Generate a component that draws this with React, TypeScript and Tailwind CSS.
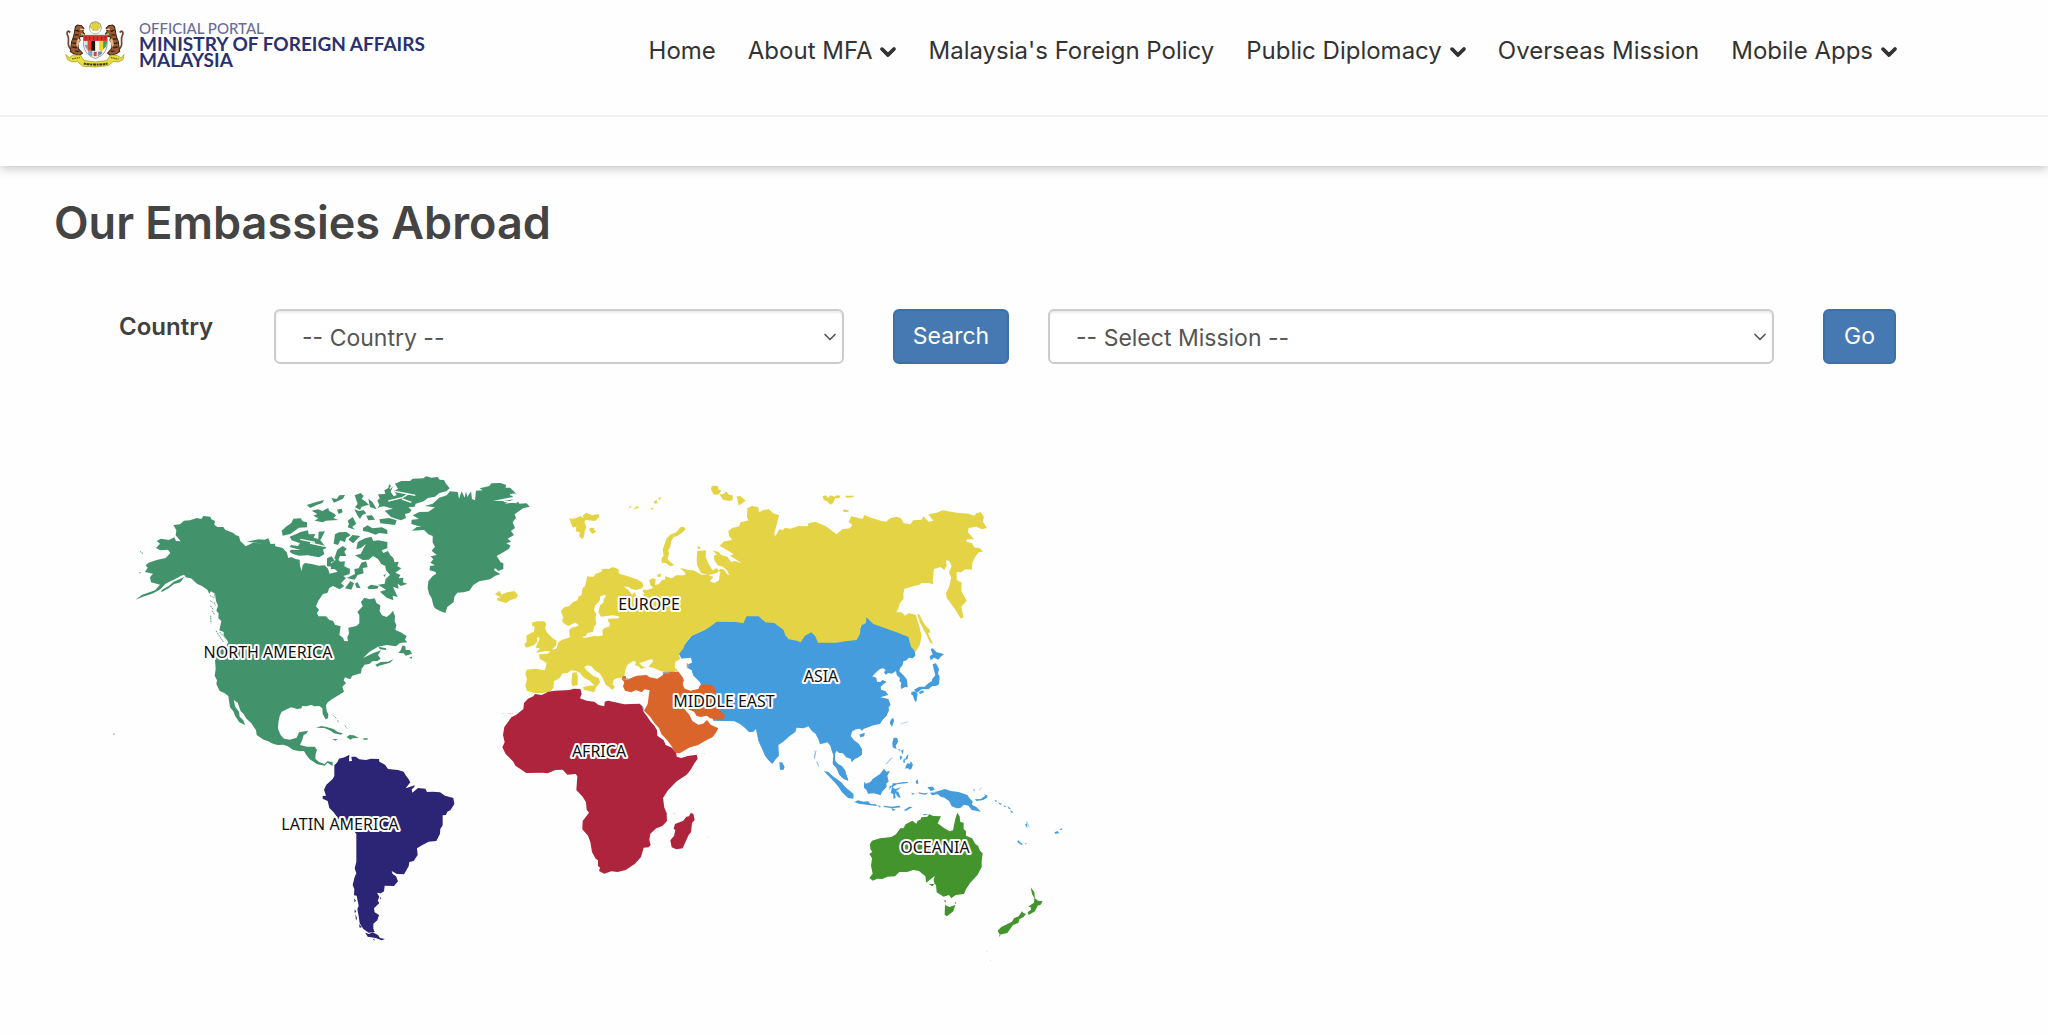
import { ChevronDown } from 'lucide-react'
import { FaChevronDown } from 'react-icons/fa6'

type NavItem = { label: string; hasMenu?: boolean }

const navItems: NavItem[] = [
  { label: 'Home' },
  { label: 'About MFA', hasMenu: true },
  { label: "Malaysia's Foreign Policy" },
  { label: 'Public Diplomacy', hasMenu: true },
  { label: 'Overseas Mission' },
  { label: 'Mobile Apps', hasMenu: true },
]

const regionLabels = [
  { name: 'NORTH AMERICA', x: 268, y: 659 },
  { name: 'LATIN AMERICA', x: 340, y: 831 },
  { name: 'EUROPE', x: 649, y: 611 },
  { name: 'AFRICA', x: 599, y: 758 },
  { name: 'MIDDLE EAST', x: 724, y: 708 },
  { name: 'ASIA', x: 821, y: 683 },
  { name: 'OCEANIA', x: 935, y: 854 },
]

function Crest() {
  return (
    <svg viewBox="76 64 176 142" className="h-12 w-[60px]" aria-hidden="true">
      {/* tigers */}
      {[false, true].map((flip) => (
        <g key={String(flip)} transform={flip ? 'translate(328 0) scale(-1 1)' : undefined}>
          <path d="M92 150C78 138 90 124 84 112C80 104 80 98 86 97L91 101" fill="none" stroke="#6d4530" strokeWidth="5" />
          <path d="M106 84L112 79L124 81L131 88L128 98L133 105L131 112L117 114L120 124L113 134L116 150L127 162L119 168L101 164L91 157L95 128L101 112Z" fill="#9a5b32" stroke="#3c2417" strokeWidth="3" />
          <path d="M106 94L118 98M103 108L116 108M99 120L114 121M97 132L111 134M97 144L110 146M106 156L117 157" stroke="#2d211b" strokeWidth="4" />
          <path d="M113 117L120 123L114 137L116 147L108 137Z" fill="#e5b989" />
          <path d="M120 91L131 92M123 105L133 108" stroke="#f1d5aa" strokeWidth="3" />
        </g>
      ))}
      {/* crescent and star */}
      <circle cx="165" cy="86" r="17" fill="#f8f5d6" stroke="#9a9b77" strokeWidth="3" />
      <path d="M150 80A17 17 0 1 0 180 80A15 15 0 0 1 150 80Z" fill="#fffef0" stroke="#aaa889" strokeWidth="2" />
      <path d="M165 69L168 75L175 73L174 80L179 84L173 88L172 95L165 92L158 95L157 88L151 84L156 80L155 73L162 75Z" fill="#e7d42b" stroke="#a69920" />
      {/* shield */}
      <path d="M130 109H200V132C200 157 186 171 165 178C144 171 130 157 130 132Z" fill="#f9f4ef" stroke="#777" strokeWidth="2" />
      <path d="M130 109H200V126H130Z" fill="#d5332d" />
      <path d="M137 112V123M148 112V123M160 112V123M171 112V123M183 112V123M194 112V123" stroke="#9d211d" strokeWidth="3" />
      <path d="M130 126H142V151C134 143 130 136 130 126Z" fill="#d8e4e7" />
      <path d="M142 126H154V155H142Z" fill="#e94032" />
      <path d="M153 126H165V155H153Z" fill="#141414" />
      <path d="M165 126H177V155H165Z" fill="#f8f4e5" />
      <path d="M176 126H188V155H176Z" fill="#f0d528" />
      <path d="M188 126H200C200 138 196 145 188 151Z" fill="#4c9d57" />
      <path d="M133 139H142V153Z" fill="#46a5bf" />
      <path d="M144 156H156V173L144 165Z" fill="#6daac8" />
      <path d="M160 158H169V171H160Z" fill="#cb4746" />
      <path d="M173 157H185V163L173 172Z" fill="#748db6" />
      {/* ribbon */}
      <path d="M78 166L88 176L98 168L121 168L132 184L165 188L199 184L210 168L231 169L241 177L250 166L247 181L234 188L218 187L203 199L165 203L128 201L112 187L95 188L82 181Z" fill="#e7dc42" stroke="#99962a" strokeWidth="2" />
      <path d="M96 179L119 175M211 175L234 180" stroke="#756f21" strokeWidth="4" strokeDasharray="5 2" />
      <path d="M131 193Q165 199 201 193" fill="none" stroke="#39380f" strokeWidth="6" strokeDasharray="6 2 9 2" />
    </svg>
  )
}

function WorldMap() {
  return (
    <svg viewBox="100 460 980 510" className="h-auto w-[980px] max-w-full" role="img" aria-label="World map of missions by region">
      <g transform="translate(740 470) scale(.33333)" fill="#459cdd">
        <path d="M-183 555L-182 540L-165 525L-145 500L-105 482L-70 455L10 455L20 436H60L100 456L130 475L190 490L215 484L240 510L350 500L378 440L440 465L505 492L520 530L525 550L526 560L518 568L506 566L500 574L490 577L488 588L480 598L478 607L492 620L501 632L503 655L495 654L484 660L482 650L484 642L478 635L480 628L470 618L468 606L455 614L445 612L437 617L432 610L437 603L430 598L420 600L410 608L397 622L409 626L411 638L421 639L427 633L440 638L430 646L422 653L423 662L436 666L445 678L421 685L445 690L452 708L446 714L447 724L440 740L428 752L420 765L400 769L385 775L372 779L365 785L360 779L348 781L337 787L332 800L342 814L355 823L366 840L366 857L352 867L345 869L335 880L332 869L318 865L309 853L297 852L290 845L285 854L285 873L292 884L305 890L315 903L320 920L325 935L311 930L299 918L291 899L278 882L280 858L275 845L271 830L262 820L252 823L240 826L235 811L227 795L215 785L205 772L191 778L170 776L166 789L149 801L130 818L115 828L117 860L107 871L97 885L84 872L75 860L65 837L55 815L48 780L39 789L27 789L15 777L0 765L-17 757L-80 755L-120 640L-160 600Z" />
        <path d="M118 880L126 880L134 894L130 903L120 902ZM572 540L578 538L590 550L612 555L602 563L595 572L582 566L572 574L569 562L578 556ZM578 585L588 583L597 600L594 614L599 623L597 646L588 651L577 651L565 661L546 660L531 671L522 662L538 653L554 653L565 643L575 637L577 629L586 619L581 600ZM515 668L526 667L533 675L530 690L522 691L519 680L513 675ZM536 670L548 664L553 669L541 675ZM454 754L460 747L462 756L456 773L450 763Z" />
        <path d="M229 845L224 855L224 870M231 880L237 895M440 885L455 867M504 758L482 765" fill="none" stroke="#8ebfe4" strokeWidth="2" />
      </g>
      <g transform="translate(800 700) scale(.33333)" fill="#459cdd">
        <path d="M72 217L84 218L99 232L124 250L135 263L151 277L161 286L160 299L144 297L126 280L114 262L103 249L85 230ZM100 190L112 192L120 205L135 215L145 245L130 238L118 228L111 209L98 195ZM192 249L198 254L211 249L218 240L232 230L240 225L252 209L259 218L270 216L262 230L266 248L259 253L260 263L246 279L242 289L221 283L204 284L199 272L192 266ZM163 309L174 304L190 308L204 307L212 315L227 316L232 321L205 318L177 314ZM277 265L291 256L323 252L325 249L310 249L290 253L278 253L275 269L272 282L280 285L280 299L287 297L285 281L295 295L302 297L295 278L288 276L305 264L286 270ZM281 116L292 117L294 129L287 140L290 151L278 145L277 132ZM178 107L194 101L193 112L181 115ZM272 63L279 57L281 68L275 81L270 72ZM317 202L322 193L330 194L332 186L339 197L334 210L328 212L324 207L316 209ZM303 156L311 151L308 166ZM299 170L308 174L301 184ZM319 172L325 166L323 180L315 183ZM311 181L314 177L315 192L309 190ZM293 151L300 151L301 157ZM382 264L399 263L404 272L392 276ZM390 281L406 280L412 286L396 289ZM405 279L435 270L452 276L476 279L502 288L510 299L518 307L516 317L529 324L543 338L515 333L505 320L492 317L481 327L470 328L455 322L447 306L433 296L422 293ZM524 301L542 300L558 289L563 295L550 303L530 306ZM233 319L242 321L240 326ZM251 320L276 323L298 320L302 325L278 328L251 324ZM311 334L328 323L338 324L318 335ZM334 281L345 284L337 287ZM355 280L371 283L385 281L376 287L358 284ZM347 247L353 241L355 254L349 254ZM274 327L288 333L278 335ZM583 302L592 306L587 309ZM594 310L607 315L600 317ZM611 318L620 325L612 323ZM623 321L634 331L626 329ZM631 334L641 340L633 341ZM675 377L681 373L682 388ZM763 400L774 396L777 403L766 404ZM777 391L788 388L785 393ZM654 423L669 437L664 438L652 429ZM674 431L681 434L677 436ZM369 345L390 346L370 349ZM551 286L562 289L561 296L557 291ZM526 276L518 273L523 271ZM342 0L351 0L348 9L344 5ZM278 258L268 273L269 262Z" />
        <path d="M44 154L47 165L43 178M49 187L56 199M257 196L276 176M537 274L545 267M679 367L688 384" fill="none" stroke="#75afe0" strokeWidth="2" />
      </g>

      <g transform="translate(500 470) scale(.33333)" fill="#e4d345">
        <path d="M80 602L106 599L129 603L135 602L140 583L132 577L119 570L117 556L143 554L156 543L170 538L175 520L187 512L210 505L207 485L213 477L234 471L234 466L225 461L205 471L190 462L186 453L190 446L183 425L193 415L208 411L218 400L232 394L236 382L244 379L248 357L255 352L262 322L280 324L286 315L305 308L306 299L327 300L337 294L355 300L358 314L382 321L410 331L426 340L431 351L423 359L407 363L394 360L384 353L371 353L383 361L397 377L404 369L409 381L428 383L434 373L427 368L430 362L443 362L460 357L451 348L447 333L459 328L467 331L465 348L477 345L487 332L495 332L496 322L515 328L528 319L552 319L557 313L540 296L565 303L580 304L605 317L624 317L640 324L629 337L643 342L656 335L661 310L650 298L637 304L626 285L617 264L618 244L592 246L590 270L591 287L603 313L626 318L651 312L661 299L672 302L681 315L688 319L681 304L666 292L653 289L643 273L641 260L650 257L638 244L655 249L665 259L682 263L693 279L705 276L725 283L707 271L690 260L701 256L677 241L659 230L673 217L697 213L687 200L685 186L697 177L717 172L722 160L746 154L741 145L742 118L756 111L775 115L777 130L793 122L806 121L820 133L837 139L832 160L823 192L825 203L838 181L851 183L854 176L871 179L895 171L923 172L925 163L947 158L980 173L1010 196L1026 181L1050 178L1057 168L1046 158L1054 142L1088 150L1093 138L1113 146L1142 155L1158 158L1172 147L1190 143L1203 148L1211 163L1232 166L1239 154L1265 152L1270 142L1286 158L1300 155L1285 136L1310 131L1328 124L1370 131L1406 134L1422 140L1430 133L1442 129L1452 144L1448 157L1461 177L1446 181L1429 173L1406 177L1404 190L1422 211L1400 211L1399 218L1415 222L1424 236L1438 236L1449 248L1436 250L1425 265L1417 281L1416 302L1397 301L1383 310L1370 309L1370 332L1385 341L1384 366L1400 395L1384 413L1390 444L1383 450L1365 421L1340 386L1338 373L1347 354L1354 326L1347 310L1355 292L1348 276L1338 274L1340 290L1333 303L1321 294L1302 300L1298 335L1300 346L1285 342L1264 342L1258 347L1213 359L1210 375L1211 389L1200 402L1195 418L1189 430L1205 430L1215 440L1227 432L1248 438L1251 450L1258 472L1265 500L1260 526L1247 549L1233 533L1225 504L1188 489L1160 479L1120 465L1099 445L1098 462L1082 470L1080 494L1070 513L1035 517L1010 521H954L946 502L934 490L915 500L902 520L891 515L866 511L856 499L850 482L823 462L796 460L776 442L740 442L730 463L708 459L650 458L626 476L600 489L575 500L555 525L551 537L537 555L540 570L526 579L524 592L534 604L511 612L483 607L460 596L445 594L460 576L455 570L418 583L427 592L439 594L423 600L416 592L405 589L408 578L398 576L382 588L376 603L373 622L362 627L350 628L341 633L338 645L345 655L336 663L329 655L317 647L307 625L300 614L284 604L274 592L263 589L253 593L258 602L280 621L297 628L300 640L290 654L279 645L267 634L250 625L240 611L228 606L213 604L202 613L188 613L179 627L162 637L160 657L148 668L125 673L101 671L81 665L76 650L81 631L76 615Z" />
        <path d="M97 460L113 457H133L139 465L135 478L142 492L158 508L170 515L168 530L157 541L160 548L135 546L108 552L120 538L107 536L114 520L120 508L105 502L102 488L104 474L96 469ZM79 500L98 489L110 493L112 518L101 529L78 536L73 526L80 518ZM217 612L229 609L233 620V648L218 652L214 640ZM249 655L267 650L290 649L283 670L270 667L252 662ZM-15 376L-2 365L5 377L21 370L43 366L54 378L49 388L30 394L18 402L-6 395L-9 387L3 385ZM486 282L484 269L491 260L488 242L499 211L509 198L529 190L542 174L551 173L557 181L546 191L532 201L521 204L514 217L510 236L505 243L507 255L502 269L512 280L523 288L511 292L496 281ZM208 148L215 149L226 148L241 142L258 151L253 159L259 174L254 188L252 203L247 211L237 201L240 190L227 187L229 173L218 175L213 163ZM248 141L258 131L276 139L296 135L297 145L285 156L263 154L253 151ZM269 177L283 176L282 182L289 188L276 195L268 183ZM635 51L654 50L655 61L664 65L656 76L641 77L637 68L633 62ZM658 75L669 76L679 67L687 78L698 79V93L688 96L669 92ZM710 82L722 82L737 95L716 110ZM968 82L978 79L984 87L992 79L1003 83L1010 79L1022 80L1017 88L1005 88L1000 101L991 107L981 97L971 93ZM1035 80L1064 80L1058 85L1040 86ZM1029 121L1048 125L1042 130L1030 128ZM1252 435L1259 437L1265 451L1274 467L1289 482L1291 491L1284 492L1299 525L1291 522L1278 495L1260 461ZM387 113L396 110L389 119ZM400 122L409 112L419 115L406 120ZM450 119L459 116L460 123ZM461 98L469 93L473 103L464 104ZM475 88L484 83L479 94ZM471 318L484 313L482 323L474 324ZM591 236L597 231L602 238L596 241Z" />
        <path d="M315 377L301 382L299 395L285 410L282 424L289 435L286 446L289 464L282 474L279 488L262 492L257 501L247 503L252 507L284 501L297 502L309 499L307 484L315 476L327 473L331 465L324 456L325 449L356 448L359 443L339 439L303 443L295 430L300 409L310 401L311 391L318 382Z" fill="#fff" />
      </g>

      <g transform="translate(480 640) scale(.33333)">
        <path d="M425 121L428 112L437 111L439 123L470 110L500 108L509 115L532 119L549 108V99L588 98L598 97L610 109L612 123L608 134L612 144L632 151L655 150L660 139L678 136L697 139L708 154L704 170L698 183L711 198L715 211L735 229L730 243L703 240L690 238L681 230L662 234L650 231L642 218L625 211L611 190L604 196L614 211L628 227L637 246L655 257L669 254L681 243L692 257L715 268L708 281L697 295L676 305L653 319L630 325L599 343L586 342L575 322L561 303L544 285L537 267L523 252L511 234L492 215L503 195L507 166L509 154L494 151L485 160L468 153L454 160L435 155L429 142L433 130Z" fill="#da652a" />
        <path d="M165 165L185 168L205 158L225 155L269 153L281 149L301 150L305 164L300 178L320 185L343 188L356 198L373 202L374 188L385 185L433 196L479 194L487 202L491 219L501 232L511 247L523 260L531 274L532 290L551 304L557 318L576 326L589 344L590 353L604 357L623 351L650 347L653 359L642 375L632 392L620 407L590 427L564 454L549 477L553 506L560 522L561 546L547 561L529 568L511 584L508 603L512 618L506 625L491 626L483 654L465 674L437 693L413 699L394 697L373 704L357 696L360 686L354 680L354 664L347 659L336 639L331 609L324 590L307 571L308 546L327 521L320 512L318 490L308 473L289 453L292 412L287 405L262 407L248 392L226 393L203 403L189 401L139 402L106 380L100 368L77 345L67 325L74 310L69 288L73 264L94 235L109 227L130 210L132 192L144 179L160 172ZM585 555L610 545L619 533L627 532L632 522L640 524L644 543L636 552L633 580L626 588L608 628L589 631L575 625L571 604L582 591L586 574L581 569Z" fill="#af243d" />
        <path d="M485 199L491 205V217Z" fill="#6fbbd4" />
        <path d="M426 120L444 118L448 123L430 124ZM548 99H566L572 103L549 104Z" fill="#a5a09a" />
        <path d="M601 59L633 56L636 71L624 76L622 86L635 94L639 108L633 119L642 128L653 150L632 155L614 149L609 136L614 128L608 115L590 91L584 86L587 76L600 69Z" fill="#fff" />
        <path d="M621 73L627 79L621 88ZM66 222L70 224M84 224L100 224M484 167L490 169M580 522L586 526M682 593L684 596M671 344L674 345" fill="#7895a5" stroke="#e5b2a0" strokeWidth="2" />
      </g>

      <g transform="translate(100 460) scale(.33333)" fill="#42936c">
        <path d="M220 198L240 196L252 185L270 184L290 177L304 180L310 171L331 173L334 181L345 186L343 197L352 204L370 204L376 213L399 221L406 228L417 232L421 246L437 262L459 251L491 254L440 248L475 241L494 242L505 238L512 255L525 254L526 262L548 267L560 280L565 297L574 294L586 300L599 302L600 320L605 336L608 318L615 312L635 315L657 320L674 319L684 329L689 344L713 338L704 330L692 331L695 312L711 300L721 308L735 307L733 322L750 330L749 345L730 351L738 357L723 373L733 381L719 391L699 381L688 387L682 402L669 405L655 425L648 442L657 452L651 462L655 472L678 472L688 483L699 485L705 497L722 502L718 528L729 536L733 546L744 547L742 534L747 524L745 506L769 501L778 493V468L772 459L788 442L783 429L793 416L809 421L824 418L830 433L841 439L839 457L846 469L860 474L871 465L879 455L885 472L884 487L889 498L886 513L902 520L920 531L915 542L922 550L900 552L888 562L860 558L834 563L809 578L789 597L820 582L843 574L834 588L842 599L832 606L817 607L809 614L794 617L785 629L783 643L757 650L750 661L735 655L731 664L738 673L727 683L732 698L718 707L698 719L684 729L678 739L680 757L685 766L684 778L677 781L668 765L667 748L658 741L642 742L634 737L620 742L606 741L605 748L592 750L573 745L545 758L539 771L535 791L534 810L542 828L552 839L570 842L590 836L597 820L624 815L619 824L611 828L607 842L600 858L621 863L644 863L651 872L647 885L646 899L657 909L673 915L682 907L698 909L698 921L682 911L674 920L652 916L629 901L619 888L612 876L599 877L579 872L563 862L550 857L532 858L515 853L505 847L491 842L470 828L468 814L454 793L438 778L431 765L422 757L413 731L401 723L406 744L417 758L419 773L430 784L435 798L418 790L406 772L400 757L390 745L385 711L373 702L359 696L349 675L351 664L344 650L347 630L345 603L353 582V557L378 561L385 550L371 529V519L358 514L364 486L355 478L356 463L349 455L354 440L348 426L345 404L333 397L328 404L322 392L307 382L291 374L273 358L253 354L241 370L222 375L206 388L184 400L185 393L207 380L221 368L258 352L250 347L224 361L207 369L197 374L181 391L160 403L129 413L106 422L127 407L165 394L180 377L153 370L150 355L159 344L135 339L143 326L137 319L146 311L170 303L197 297L211 282L204 272L181 274L168 267L180 254L170 246L183 239L207 243L223 235L228 246L242 247L227 229L229 214Z" />
        <path d="M545 215L558 203L574 192L580 179L602 178L608 187L621 190V205L597 206L571 225L548 230ZM569 233L591 224L601 219L624 214L626 226L646 225L641 236L655 240L656 218L675 217L661 244L679 267L669 272L673 286L657 295L624 289L596 290L579 285L569 279L572 272L602 273L569 264L573 258L594 261L600 253L575 244ZM620 138L651 128L672 123L667 132L648 139L631 147ZM635 155L654 151L667 156L685 147L687 155L704 165L708 170L700 177L715 183L677 185L669 190L644 185L655 178L640 170L652 165ZM694 117L710 120L718 109L735 108L729 119L702 131ZM711 152L725 149L728 160L716 165ZM764 109L782 102L791 111L785 119L795 127L807 137L785 143L780 153L765 144L773 135ZM763 151L778 156L790 153L799 163L787 168L780 180L773 170ZM743 185L758 174L769 194L757 203L764 212L743 205L747 195ZM789 207L803 199L817 208L846 205L862 213V225L837 222L827 227L805 219L789 216ZM705 226L717 220L740 219L752 229L738 237L735 250L721 244L714 258L701 254ZM745 242L757 228L781 231L769 242L760 253ZM712 272L728 261L740 269L733 278L739 291L720 291L713 309L703 298ZM681 298L695 292L704 306L692 310L705 324L681 322ZM769 271L773 249L795 238L814 233L820 246L835 244L862 249L862 268L845 274L850 282L864 276L870 287L880 297L884 310L896 308L892 322L904 328L886 341L901 348L896 358L910 356L909 370L922 374L903 381L893 374L896 389L879 383L893 414L878 410L880 424L860 416L840 398L858 392L834 377L854 374L857 360L870 348L858 334L856 321L843 314L834 300L819 291L806 302L788 303L765 289L782 285L798 254L784 266ZM740 357L765 345L763 330L776 328L784 311L798 307L803 325L788 327L791 343L773 348L764 362ZM735 388L751 366L762 373L754 392ZM765 375L772 369L782 388L770 386ZM802 384L813 377L836 381L832 389L806 391ZM850 349L857 345L855 354ZM895 582L903 572L907 560L916 561L917 573L930 573L936 584L917 590L911 583ZM826 617L843 609L864 608L881 600L870 611L837 620L832 624ZM835 563L858 568L859 573L840 571ZM648 806L664 801L679 804L701 810L713 819L728 823L723 827L702 823L692 815L673 807ZM740 834L748 828L761 829L777 837L758 838L751 842ZM697 840L713 840L706 845ZM790 838H803V842H790ZM928 594L937 593L934 600Z" />
        <path d="M832 150L838 137L832 125L839 118L834 106L856 105L853 94L865 87L867 76L878 84L872 98L881 112L890 108L883 96L894 89L885 74L904 66L930 66L938 59L970 58L979 52L994 56L1013 54L1019 62L1032 63L1037 73L1049 88L1039 97L1018 102L1005 113L984 117L971 127L947 134L944 143L925 145L935 153L928 162L915 165L918 177L903 184L888 179L873 174L854 155L879 149L852 142L839 144ZM838 181L867 177L890 184L885 198L867 196L841 193ZM805 119L817 128L830 151L810 144ZM799 170L816 169L825 182L805 184Z" />
        <path d="M935 182L957 180L938 169L958 159L985 158L1005 145L974 141L998 134L1018 116L1040 109L1050 97L1073 99L1077 119L1085 97L1094 116L1098 97L1102 114L1113 97L1116 120L1125 124L1128 95L1148 94L1139 88L1168 81L1174 73L1201 72L1218 77L1217 86L1230 86L1251 106L1231 108L1240 114L1208 120L1179 125L1210 126L1240 121L1215 134L1255 129L1258 134L1280 133L1289 143L1269 148L1244 166L1248 176L1238 190L1245 207L1233 216L1242 228L1223 239L1234 248L1219 253L1232 260L1226 270L1206 282L1190 291L1202 310L1210 313V330L1195 336L1185 327L1182 334L1201 346L1186 350L1170 361L1138 367L1120 378L1108 395L1091 400L1072 401L1063 413L1061 429L1042 444L1036 462L1020 456L1005 448L1000 439L995 418L987 404L983 388L985 367L998 351L1008 345L1007 339L989 334L990 321L1005 319L991 311L1000 301L992 292L1010 288L995 275L1005 263L998 251V231L985 226L972 213L936 215L950 204L964 204L934 195Z" />
        <path d="M865 126L907 116L925 105L946 109M884 97L925 105M878 78L870 89M934 130L906 120M1211 127L1250 131M1230 107L1250 105M750 285L777 272M630 252L674 262M601 241L645 250" fill="none" stroke="#fff" strokeWidth="4" />
        <path d="M330 410L338 414M345 406L341 418M331 425L338 430M342 430L346 440M331 440L340 452M332 470L333 493M337 455L344 468M348 515L371 550M359 519L379 540M700 770L709 778M713 784L716 791M735 800L741 808M117 341L124 342M120 277L129 284" fill="none" stroke="#5fa383" strokeWidth="3" strokeDasharray="5 2" />
        <path d="M39 823H44V828H39Z" fill="#bbb" />
      </g>

      <g transform="translate(280 720) scale(.33333)" fill="#2c2474">
        <path d="M163 139L172 130L177 119L194 115L208 107L207 127L216 126L214 113L227 113L238 121L258 123L273 119L297 120L298 128L315 137L324 150L354 153L371 158L377 169L385 179L391 190L377 208L404 199L403 204L395 211L397 221L414 207L436 209L441 219L457 218L480 220L495 230L520 237L523 255L511 274L502 278L498 288L488 289V319L481 330L480 344L469 366L446 368L426 379L411 388L413 408L401 426L388 429L386 442L372 466L351 465L335 456L338 465L348 472L354 487L342 501L314 500L312 517L303 523L291 521L298 533L293 545L298 552L282 568L284 580L297 588L292 604L280 614V629L284 639L266 641L250 630L239 613L236 592L232 570L236 561L230 530L222 529L223 510L218 498L223 477L229 463L224 448L229 429V345L216 328L176 301L161 280L148 267L143 246L128 239V231L138 230L132 212L139 197L158 180L163 171Z" />
        <path d="M256 641L267 645L278 640L294 648L300 657L315 660L305 664L287 657L263 653ZM222 538L228 545L224 550ZM224 570L229 579L224 581ZM226 586L231 597L228 605ZM237 615L246 625L239 626ZM279 661L283 659L283 666ZM300 534L304 537L302 542Z" />
      </g>

      <g transform="translate(800 700) scale(.33333)" fill="#43942d">
        <path d="M210 435L216 425L240 418L274 414L288 406L301 388L310 388L317 376L337 365L349 374L353 365L361 362L364 355L382 353L388 346L400 351L423 352L413 373L432 387L449 397L459 394L466 359L472 341L479 352L481 369L491 371L491 391L498 396V410L516 418L526 435L534 440L540 455L548 463L545 487V504L533 527L511 551L498 571L492 585L467 588L454 598L447 588L431 593L410 580L408 558L403 554L401 543L404 531L379 551L376 532L357 516L340 513L321 519L298 519L285 532L262 533L247 540L231 539L219 545L208 537L218 524L213 500L216 478L208 464L217 459L211 450ZM435 618L448 624L466 618L460 637L441 652L434 648ZM432 606L437 602V611ZM464 611L468 609L468 616ZM386 556L404 554L397 562ZM692 565L703 580L705 598L714 605L728 607L722 617L713 620L705 637L686 648L683 640L693 632L692 624L684 623L702 611L703 597L696 585ZM666 637L670 642L678 645L670 655L658 661L655 672L639 678L622 702L599 707L593 695L604 684L636 668L642 658L656 652ZM597 709L602 709L597 713Z" />
        <path d="M559 757H562V760H559M570 784H573V787H570" fill="#c3e2da" />
      </g>

      <g fontFamily='"Noto Sans", sans-serif' fontSize="16" textAnchor="middle" fill="#111" stroke="#fff" strokeWidth="4" strokeLinejoin="round" paintOrder="stroke">
        {regionLabels.map((r) => (
          <text key={r.name} x={r.x} y={r.y}>{r.name}</text>
        ))}
      </g>
    </svg>
  )
}

function SelectBox({ id, label, text, className }: { id: string; label?: string; text: string; className: string }) {
  return (
    <div className={`relative min-w-0 ${className}`}>
      <select
        id={id}
        aria-label={label}
        className="h-[55px] w-full appearance-none rounded-md border-2 border-[#ccc] bg-white pt-1 pl-[26px] pr-9 text-[23px] text-[#555] shadow-[inset_0_2px_2px_rgba(0,0,0,0.08)]"
      >
        <option>{text}</option>
      </select>
      <ChevronDown className="pointer-events-none absolute top-[18px] right-1 text-[#555]" size={20} strokeWidth={2} />
    </div>
  )
}

export default function App() {
  return (
    <div className="min-h-screen bg-[#fefefe] font-['Inter',sans-serif] text-[#404040]">
      <header className="bg-[#fefefe] shadow-[0_2px_10px_rgba(0,0,0,0.25)]">
        <div className="flex h-[117px] items-start justify-between border-b-2 border-[#f0f0f0] pt-5 pr-[151px] pl-[65px]">
          <a href="#" className="flex items-center gap-[14px] font-['Lato',sans-serif]">
            <Crest />
            <span className="flex flex-col text-[19px] leading-4 font-bold text-[#29326f]">
              <span className="text-[15px] leading-4 font-medium text-[#686e98]">OFFICIAL PORTAL</span>
              <span>MINISTRY OF FOREIGN AFFAIRS</span>
              <span>MALAYSIA</span>
            </span>
          </a>
          <nav className="flex items-center gap-8 pt-[11px] text-2xl whitespace-nowrap text-[#333]">
            {navItems.map((item) => (
              <a key={item.label} href="#" className="flex items-center gap-2 leading-10">
                {item.label}
                {item.hasMenu && <FaChevronDown size={16} className="overflow-visible stroke-current stroke-[56]" />}
              </a>
            ))}
          </nav>
        </div>
        <div className="h-[49px]" />
      </header>

      <main className="pr-[152px] pl-[54px]">
        <h1 className="pt-[27px] text-[45px] leading-[60px] font-semibold text-[#444]">Our Embassies Abroad</h1>
        <form className="mt-14 flex items-start pl-[65px]" onSubmit={(e) => e.preventDefault()}>
          <label htmlFor="country" className="w-[155px] text-2xl leading-9 font-semibold">Country</label>
          <SelectBox id="country" text="-- Country --" className="flex-[570]" />
          <button type="submit" className="ml-[49px] h-[55px] w-[116px] rounded-md border-2 border-[#3f6fa5] bg-[#4679b2] text-[23px] text-white">Search</button>
          <SelectBox id="mission" label="Mission" text="-- Select Mission --" className="ml-[39px] flex-[726]" />
          <button type="button" className="ml-[49px] h-[55px] w-[73px] rounded-md border-2 border-[#3f6fa5] bg-[#4679b2] text-[23px] text-white">Go</button>
        </form>
        <section className="mt-[95px] pl-[46px]">
          <WorldMap />
        </section>
      </main>
    </div>
  )
}
